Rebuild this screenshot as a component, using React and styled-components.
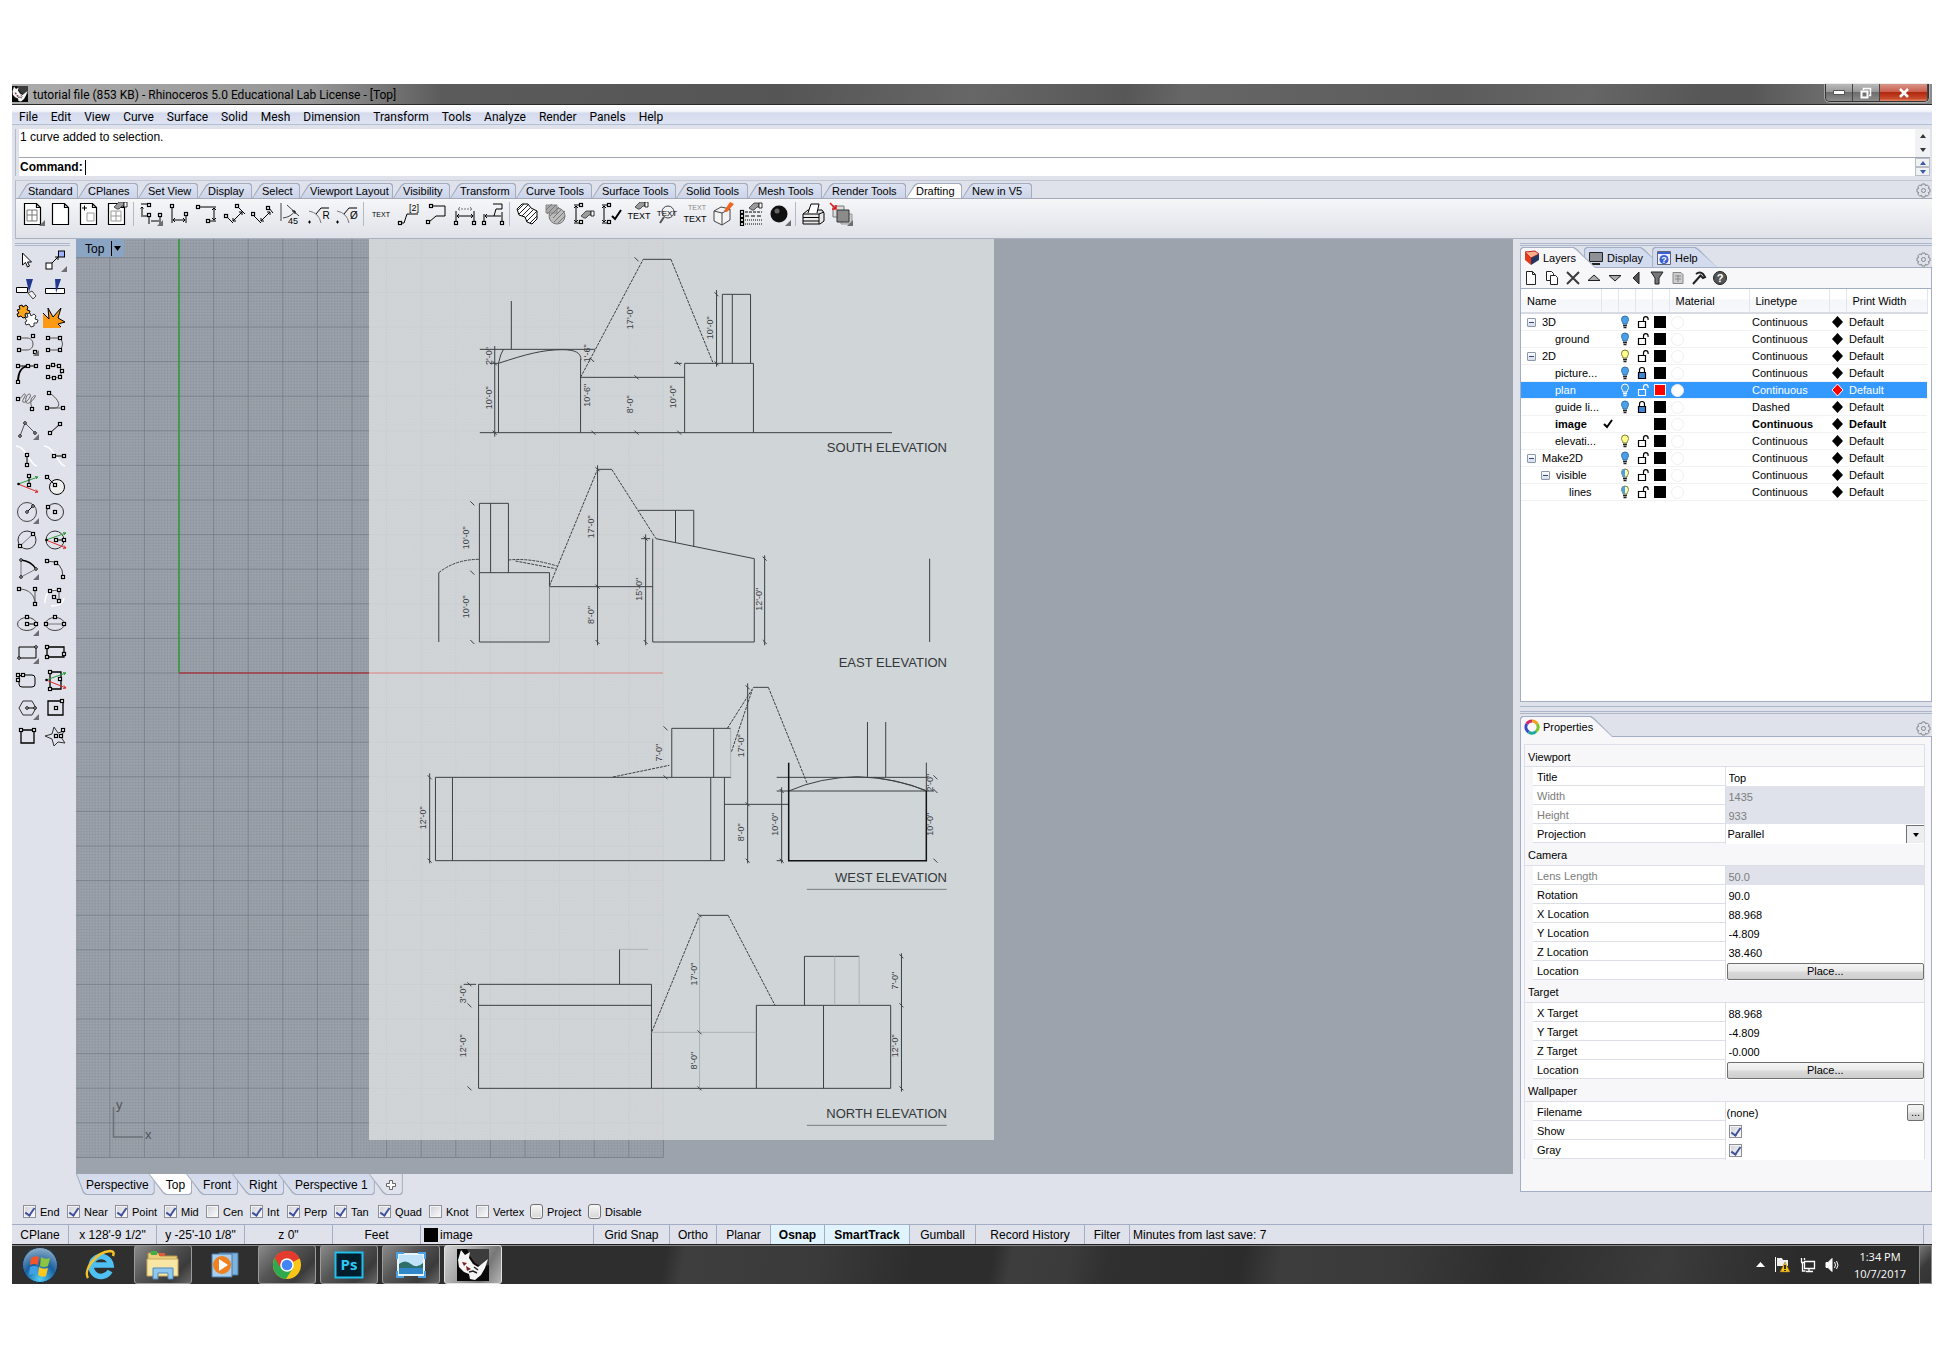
import React from 'react';
import styled, { createGlobalStyle, css } from 'styled-components';

const ui = '"Liberation Sans", Arial, sans-serif';
const caption = 'Roboto, "Open Sans", sans-serif';
const segoe = '"Open Sans", "Noto Sans", sans-serif';

const Global = createGlobalStyle`
  * { box-sizing: border-box; }
  body { margin: 0; background: #fff; color: #000; font: 11px/16px ${ui}; }
  button, input, select { font: inherit; color: inherit; margin: 0; }
  button { padding: 0; border: 0; background: none; }
  svg { display: block; flex: none; }
`;

const Page = styled.div`
  min-height: 100vh;
  padding: 84px 12px;
`;
const Window = styled.div`
  display: flex;
  flex-direction: column;
  height: calc(100vh - 168px);
  min-height: 900px;
  background: #dfe2ea;
`;

/* ---------- title bar ---------- */
const TitleBar = styled.header`
  display: flex;
  align-items: center;
  height: 21px;
  flex: none;
  padding-right: 3px;
  gap: 5px;
  border-bottom: 1px solid #2b2b2b;
  font: 12px/20px ${caption};
  background:
    linear-gradient(90deg, rgba(175,175,175,.95) 0, rgba(160,160,160,.85) 300px, rgba(100,100,100,0) 430px, transparent calc(100% - 180px), rgba(170,170,170,.6) 100%),
    linear-gradient(100deg, #666 0, #5a5a5a 25%, #555 40%, #676767 50%, #575757 58%, #666 61%, #5c5c5c 75%, #666 82%, #575757 88%, #5a5a5a 100%);
`;
const Title = styled.h1`
  margin: 0;
  padding-top: 1px;
  flex: 1;
  font: inherit;
`;
const WinButtons = styled.div`
  display: flex;
  align-self: flex-start;
  height: 18px;
  border: 1px solid #333;
  border-top: 0;
  border-radius: 0 0 5px 5px;
  overflow: hidden;
  box-shadow: 0 0 0 1px rgba(220,220,220,.5);
`;
const WinButton = styled.button`
  display: grid;
  place-items: center;
  width: ${p => (p.$close ? 48 : 27)}px;
  border-right: 1px solid #444;
  background: ${p => p.$close
    ? 'linear-gradient(#d9958a, #c9604e 45%, #b1280f 50%, #c8492c 85%, #e08a6a)'
    : 'linear-gradient(#b9b9b9, #9a9a9a 45%, #6d6d6d 50%, #8b8b8b)'};
`;

/* ---------- menu and command ---------- */
const MenuBar = styled.nav`
  display: flex;
  flex: none;
  gap: 13px;
  height: 20px;
  padding-left: 7px;
  border-bottom: 1px solid #b3bfd2;
  font: 12px/22px ${caption};
  background: linear-gradient(#fff, #f0f3fa 35%, #d5dbed 42%, #dfe4f4);
`;
const MenuItem = styled.button`
  padding-top: 1px;
  white-space: nowrap;
`;
const CommandArea = styled.section`
  flex: none;
  margin: 4px 2px 4px 3px;
  padding-left: 3px;
  border-left: 1px solid #b3bac8;
  font-size: 12px;
`;
const CommandLine = styled.div`
  display: flex;
  align-items: center;
  height: ${p => p.$h}px;
  padding-left: 1px;
  background: #fff;
  ${p => p.$history && css`
    align-items: flex-start;
    border-bottom: 1px solid #a0a5b1;
  `}
`;
const Grow = styled.span`
  flex: 1;
`;
const CommandLabel = styled.label`
  font-weight: bold;
  padding: 0 2px 1px 0;
`;
const CommandInput = styled.input`
  flex: 1;
  height: 15px;
  border: 0;
  border-left: 1px solid #000;
  outline: 0;
`;
const Spin = styled.div`
  display: grid;
  grid-template-rows: 1fr 1fr;
  width: 15px;
  height: 100%;
  background: #f1f2f4;
`;
const SpinButton = styled.button`
  display: grid;
  place-items: center;
  border: ${p => (p.$boxed ? '1px solid #b9bdc8' : '0')};
`;

/* ---------- tool tabs ---------- */
const TabStrip = styled.div`
  display: flex;
  flex: none;
  align-items: flex-end;
  height: 19px;
  margin-left: 3px;
  padding-left: 2px;
  border-top: 1px solid #c2c7d3;
  border-bottom: 1px solid #a3a9b6;
  border-left: 1px solid #b3bac8;
`;
const ToolTab = styled.button`
  position: relative;
  isolation: isolate;
  width: ${p => p.$w}px;
  height: 15px;
  padding-left: 10px;
  line-height: 16px;
  text-align: left;
  white-space: nowrap;
  &::before, &::after {
    content: '';
    position: absolute;
    z-index: -1;
    inset: 0;
    background: #a4adbf;
    clip-path: polygon(0 100%, 8px 2px, 11px 0, calc(100% - 2px) 0, 100% 2px, 100% 100%);
  }
  &::after {
    inset: 1px 1px 0 1px;
    background: ${p => (p.$active ? '#fff' : 'linear-gradient(#dde3f1, #ccd4e9)')};
  }
`;
const Gear = styled.button`
  margin-left: auto;
  padding: 1px 1px 0 0;
`;
const Toolbar = styled.div`
  display: flex;
  flex: none;
  height: 40px;
  margin-left: 3px;
  padding: 1px 0 0 3px;
  border-left: 1px solid #b3bac8;
  border-bottom: 1px solid #a9b0c0;
  background: linear-gradient(#f6f6f8, #dfe2e9);
`;
const ToolButton = styled.button`
  display: grid;
  place-items: center;
  width: 28px;
  height: 28px;
  flex: none;
`;
const ToolSep = styled.span`
  width: 6px;
  height: 24px;
  margin-top: 2px;
  background: linear-gradient(90deg, transparent 2px, #b5b9c3 2px, #b5b9c3 3px, transparent 3px);
`;

/* ---------- workspace ---------- */
const Workspace = styled.div`
  display: flex;
  flex: 1;
  min-height: 0;
`;
const Sidebar = styled.aside`
  width: 64px;
  flex: none;
  padding: 4px 0 0 1px;
`;
const Grip = styled.div`
  height: 3px;
  margin-right: ${p => p.$r || 0}px;
  margin-left: ${p => p.$l || 0}px;
  border: solid #aeb7ca;
  border-width: 1px 0;
`;
const SideTools = styled.div`
  display: grid;
  grid-template-columns: 28px 28px;
  grid-auto-rows: 28px;
`;
const Center = styled.main`
  display: flex;
  flex: 1;
  flex-direction: column;
  min-width: 0;
`;
const Viewport = styled.div`
  position: relative;
  flex: 1;
  min-height: 0;
  overflow: hidden;
  background: #9da3ac;
`;
const ViewTitle = styled.button`
  position: absolute;
  top: 0;
  left: 0;
  display: flex;
  align-items: center;
  gap: 7px;
  height: 18px;
  padding: 1px 3px 0 9px;
  background: #8aa4c4;
  font-size: 12px;
`;
const ViewArrow = styled.span`
  display: grid;
  place-items: center;
  height: 15px;
  padding-left: 2px;
  border-left: 1px solid #000;
`;
const ViewTabs = styled.div`
  display: flex;
  flex: none;
  height: 23px;
`;
const ViewTab = styled.button`
  --slant: 14px;
  position: relative;
  isolation: isolate;
  display: grid;
  place-items: center;
  height: 21px;
  margin-right: -6px;
  padding: 0 7px 0 17px;
  font-size: 12px;
  white-space: nowrap;
  &:first-child {
    --slant: 7px;
    padding: 0 6px 0 10px;
  }
  &::before, &::after {
    content: '';
    position: absolute;
    z-index: -1;
    inset: 0;
    background: #a4adbf;
    clip-path: polygon(0 0, 100% 0, 100% calc(100% - 2px), calc(100% - 2px) 100%, calc(var(--slant) + 3px) 100%, var(--slant) calc(100% - 2px));
  }
  &::after {
    inset: 0 1px 1px 1px;
    background: ${p => (p.$active ? '#fff' : p.$plain ? '#e0e3ec' : 'linear-gradient(#d3daeb, #dbe0ee)')};
  }
`;

/* ---------- right panels ---------- */
const RightColumn = styled.aside`
  display: flex;
  flex-direction: column;
  width: 412px;
  flex: none;
  margin: 4px 0 5px 7px;
`;
const PanelTabs = styled.div`
  display: flex;
  align-items: flex-end;
  flex: none;
  height: ${p => p.$h}px;
  border-bottom: 1px solid #a3aec4;
`;
const PanelTab = styled.button`
  position: relative;
  isolation: isolate;
  display: flex;
  align-items: center;
  gap: 3px;
  height: 21px;
  margin-bottom: -1px;
  margin-right: ${p => p.$overlap || 0}px;
  padding: 0 20px 0 4px;
  z-index: ${p => (p.$active ? 3 : 1)};
  &::before, &::after {
    content: '';
    position: absolute;
    z-index: -1;
    inset: 0;
    background: #a3aec4;
    clip-path: polygon(0 2px, 2px 0, calc(100% - 22px) 0, calc(100% - 19px) 2px, 100% 100%, 0 100%);
  }
  &::after {
    inset: 1px 1px ${p => (p.$active ? 0 : 1)}px 1px;
    background: ${p => (p.$active ? '#f7f7fa' : '#d3dbee')};
  }
`;
const LayersBody = styled.section`
  display: flex;
  flex-direction: column;
  flex: 1;
  min-height: 0;
  border: 1px solid #a3aec4;
  border-top: 0;
  background: #fff;
`;
const LayerTools = styled.div`
  display: flex;
  align-items: center;
  gap: 5px;
  height: 21px;
  padding-left: 2px;
  border-bottom: 1px solid #a3aec4;
  background: #f7f7fa;
`;
const LayerTool = styled.button`
  width: 16px;
  height: 16px;
`;
const LayerTable = styled.table`
  width: 406px;
  table-layout: fixed;
  border-collapse: collapse;
`;
const Th = styled.th`
  height: 24px;
  padding: 0 0 0 6px;
  border-right: 1px solid #e3e6ee;
  border-bottom: 2px solid #d9dbe2;
  text-align: left;
  font-weight: normal;
  white-space: nowrap;
  background: linear-gradient(#fff 45%, #f5f6f9 46%, #f7f8fb);
`;
const LayerRow = styled.tr`
  height: 17px;
  ${p => p.$bold && css`font-weight: bold;`}
  ${p => p.$selected && css`background: #3399ff; color: #fff;`}
`;
const Td = styled.td`
  height: 17px;
  padding: 0 0 0 ${p => p.$pl || 0}px;
  border-bottom: 1px solid #f1f2f4;
  line-height: 16px;
  white-space: nowrap;
`;
const LayerName = styled.div`
  display: flex;
  align-items: center;
  gap: 6px;
  padding-left: ${p => p.$indent}px;
`;
const Expander = styled.button`
  width: 9px;
  height: 9px;
  border: 1px solid #8a97ad;
  border-radius: 1px;
  background: linear-gradient(#2d4a7c, #2d4a7c) center / 5px 1px no-repeat, linear-gradient(#fff, #d6dbe5);
`;
const Swatch = styled.div`
  width: 12px;
  height: 12px;
  margin-left: 2px;
  background: ${p => p.$c};
  border: 1px solid ${p => (p.$selected ? '#fff' : p.$c)};
`;
const MaterialDot = styled.div`
  width: 13px;
  height: 13px;
  margin-left: 2px;
  border: 1px solid #eeeff2;
  border-radius: 50%;
  background: #fff;
`;
const Splitter = styled.div`
  flex: none;
  height: 14px;
  padding-top: 4px;
`;
const SplitLine = styled.div`
  height: ${p => p.$h}px;
  border-top: 1px solid #aeb7ca;
`;
const PropsBody = styled.section`
  flex: none;
  padding: 7px 6px 32px 3px;
  border: 1px solid #a3aec4;
  border-top: 0;
  background: #f7f7fa;
`;
const PropsGrid = styled.div`
  border: 1px solid #dcdfe7;
  border-bottom: 0;
`;
const PropHeader = styled.h2`
  height: ${p => (p.$first ? 22 : 23)}px;
  margin: 0;
  padding-left: 3px;
  border-bottom: 1px solid #dcdfe7;
  font: 11px/24px ${ui};
`;
const PropRow = styled.div`
  display: grid;
  grid-template-columns: 1fr 1fr;
  height: 19px;
  margin-left: 8px;
  border-bottom: 1px solid #dcdfe7;
  background: #fff;
  color: ${p => (p.$off ? '#7d7d7d' : '#000')};
`;
const PropLabel = styled.label`
  padding-left: 4px;
  margin-right: -4px;
  line-height: 20px;
`;
const PropCell = styled.div`
  display: flex;
  align-items: center;
  min-width: 0;
  margin-left: -4px;
  padding: ${p => (p.$tight ? '0 0 0 1px' : '0 0 0 3px')};
  border-left: 1px solid #dcdfe7;
  background: ${p => (p.$off ? '#dfe2ea' : '#fff')};
`;
const PropInput = styled.input`
  width: 100%;
  min-width: 0;
  height: 18px;
  padding: 1px 0 0;
  border: 0;
  outline: 0;
  background: transparent;
`;
const PropSelect = styled.select`
  width: 100%;
  height: 18px;
  padding: 0 0 0 1px;
  border: 0;
  appearance: none;
  background: transparent;
`;
const DropButton = styled.span`
  display: grid;
  place-items: center;
  width: 18px;
  height: 18px;
  flex: none;
  border: solid #6d7078;
  border-width: 1px 0 0 1px;
  background: #eceef0;
`;
const PushButton = styled.button`
  height: 17px;
  width: ${p => (p.$small ? '17px' : '100%')};
  flex: none;
  border: 1px solid #707070;
  border-radius: 2px;
  line-height: 15px;
  background: linear-gradient(#f4f4f4, #ebebeb 48%, #dadada 52%, #cfcfcf);
`;
const Check = styled.input`
  position: relative;
  appearance: none;
  width: 13px;
  height: 13px;
  flex: none;
  border: 1px solid #8e8f94;
  background: linear-gradient(135deg, #cdd0d6, #fdfdfd);
  box-shadow: inset 0 0 0 1px #f4f4f4;
  ${p => p.$round && css`
    height: 15px;
    border-color: #707070;
    border-radius: 3px;
    background: linear-gradient(#f7f7f7, #d5d5d5);
  `}
  &:checked::after {
    content: '';
    position: absolute;
    left: 3px;
    top: 0;
    width: 4px;
    height: 8px;
    border: solid #41509a;
    border-width: 0 2px 2px 0;
    transform: rotate(35deg);
  }
`;

/* ---------- bottom bars ---------- */
const Osnap = styled.div`
  display: flex;
  align-items: center;
  flex: none;
  height: 27px;
  margin-left: 3px;
  padding: 2px 0 0 8px;
`;
const OsnapItem = styled.label`
  display: flex;
  align-items: center;
  gap: 4px;
  width: ${p => p.$w}px;
  white-space: nowrap;
`;
const StatusBar = styled.footer`
  display: flex;
  flex: none;
  height: 20px;
  padding-right: 8px;
  border-top: 1px solid #a3aec4;
  font-size: 12px;
`;
const StatusCell = styled.button`
  display: flex;
  align-items: center;
  justify-content: ${p => (p.$left ? 'flex-start' : 'center')};
  gap: 2px;
  width: ${p => p.$w}px;
  padding-left: ${p => (p.$left ? 3 : 0)}px;
  border-right: 1px solid #a3aec4;
  white-space: nowrap;
  ${p => p.$grow && css`flex: 1;`}
  ${p => p.$on && css`background: #e1f3fd; font-weight: bold;`}
`;
const LayerChip = styled.span`
  width: 14px;
  height: 14px;
  background: #000;
`;
const Taskbar = styled.div`
  display: flex;
  align-items: stretch;
  flex: none;
  gap: 4px;
  height: 40px;
  border-top: 1px solid #222;
  box-shadow: inset 0 1px 0 #8b8b8b;
  background: linear-gradient(100deg, #2f2f2f 0, #2e2e2e 34%, #3e3e3e 35%, #3a3a3a 42%, #2d2d2d 47%, #2d2d2d 51%, #3d3d3d 52%, #3b3b3b 55%, #303030 57%, #2c2c2c 64%, #3d3d3d 66%, #3a3a3a 72%, #2d2d2d 78%, #3b3b3b 86%, #2b2b2b 93%);
`;
const TaskButton = styled.button`
  display: grid;
  place-items: center;
  width: ${p => (p.$start ? 56 : 58)}px;
  border-radius: 3px;
  ${p => p.$open && css`
    border: 1px solid #9b9b9b;
    background: linear-gradient(135deg, #8a8a8a, #555 40%, #3b3b3b 75%, #666);
  `}
  ${p => p.$current && css`
    border: 1px solid #e3e3e3;
    background: linear-gradient(120deg, #d4d4d4, #9c9c9c 45%, #777 70%, #b5b5b5);
  `}
`;
const Tray = styled.div`
  display: flex;
  align-items: center;
  margin-left: auto;
  gap: 9px;
  color: #fff;
`;
const Clock = styled.time`
  width: 60px;
  text-align: center;
  font: 11px/17px ${segoe};
`;
const ShowDesktop = styled.button`
  width: 13px;
  align-self: stretch;
  border: 1px solid #8b8b8b;
  background: linear-gradient(135deg, #777, #3a3a3a 50%, #333);
`;

/* ---------- icon helpers ---------- */
const Svg = ({ s = 24, children }) => (
  <svg width={s} height={s} viewBox={`0 0 ${s} ${s}`} fill="none" stroke="#000" strokeWidth="1">{children}</svg>
);
const Tri = () => <path d="M24 18v6h-6z" fill="#6e6e72" stroke="none" />;
const Nodes = ({ at }) => at.map(([x, y], i) => (
  <rect key={i} x={x - 1.5} y={y - 1.5} width="3" height="3" fill="#fff" stroke="#000" strokeWidth="1.2" />
));
const Dots = ({ at }) => at.map(([x, y], i) => (
  <circle key={i} cx={x} cy={y} r="1.3" fill="#fff" stroke="#000" />
));
const Axes = () => (
  <>
    <path d="M3 12L23 5M20 4.5l3 .5-2 2" stroke="#2f9e3c" />
    <path d="M3 12l20 8M21 17.500l2 2.500-3 .5" stroke="#e02b2b" />
    <circle cx="3.500" cy="12" r="1.300" fill="#000" stroke="none" />
  </>
);
const Hand = ({ x = 0, y = 0 }) => (
  <g transform={`translate(${x} ${y})`}>
    <path d="M0 5L5 0h5v4H8L5 7H3z" fill="#9a9a9a" stroke="#333" strokeWidth=".8" />
    <path d="M10 0h3v5h-3z" fill="#fff" strokeWidth=".8" />
  </g>
);
const PageShape = ({ fill = '#fff' }) => <path d="M3.500 1.500h12l4 4v17h-16zM15.500 1.500v4h4" fill={fill} strokeWidth="1.200" />;

const sideIcons = [
  ['Select', <path key="a" d="M7.500 5v12l3-2.500 2 4.500 2-1-2-4h4z" fill="#fff" />],
  ['Move', <><path d="M8 16l7-7M12 9h3v3" /><rect x="3" y="15" width="6" height="6" fill="#fff" /><rect x="15.500" y="3" width="6" height="6" fill="#9db4ff" /><Tri /></>],
  ['Trim', <><path d="M1.500 11.500h11v5h-11z" fill="#fff" /><path d="M11 3h7l-4 13z" fill="#213a8f" stroke="none" /><path d="M13 17l4-2 4 5-3 3z" fill="#f0f0f0" stroke="#444" /></>],
  ['Split', <><path d="M2.500 12.500h19v5h-19z" fill="#fff" /><path d="M12 3h6l-5 14z" fill="#213a8f" stroke="none" /></>],
  ['Join', <><path d="M2 6l3-1-1-3 3-1 1 2 3-2 2 2-1 3 3 1-1 3-3-1-1 2 1 2-3 1-2-2-3 1-1-3 2-1z" fill="#f9a51a" /><path d="M10 14l3-1-1-3 3-1 1 3 3-2 2 2-1 3 3 1-1 3-3 0 0 3-3 1-2-3-3 1-1-3 2-1z" fill="#fff" stroke="#333" /></>],
  ['Explode', <><path d="M0 24V9l6 6-1-11 5 9 8-9-3 10 7 4-7 2 3 4z" fill="#fb9a12" stroke="none" /><path d="M0 9l6 6-1-11 5 9 8-9-3 10 7 4-7 2 3 3" /></>],
  ['Curve', <><path d="M4 6h8c8 0 8 12 0 12H4" stroke="#555" /><Nodes at={[[4, 6], [18, 4], [4, 18], [20, 20]]} /><Tri /></>],
  ['Interpolate curve', <><path d="M5 6h12q5 6 0 12H5" stroke="#555" /><Nodes at={[[5, 6], [17, 6], [5, 18], [17, 18]]} /></>],
  ['Conic', <><path d="M3 22C3 12 7 6 14 6" strokeWidth="2" /><path d="M3 6h18" /><Nodes at={[[3, 6], [13, 6], [21, 6], [3, 22]]} /></>],
  ['Points curve', <><path d="M5 7l5-2 6 1 3 5-2 6-6 1-6-1" stroke="#777" /><Nodes at={[[5, 7], [10, 5], [16, 6], [19, 11], [17, 17], [11, 18], [5, 17]]} /></>],
  ['Helix', <><path d="M3 11c4 0 5-6 7-5s-4 7-2 8 5-1 7-5-3-4-4 1 1 6 3 5 4-3 6-6-3-1-4 3 1 6 1 9" stroke="#666" /><Nodes at={[[3, 11], [17, 21]]} /></>],
  ['Parabola', <><path d="M6 5c8 4 14 14 6 15H4h16" stroke="#555" /><Nodes at={[[6, 5], [4, 20], [20, 20]]} /></>],
  ['Polyline', <><path d="M5 20L10 7l10 10" stroke="#555" /><Dots at={[[5, 20], [10, 7], [20, 17]]} /><Tri /></>],
  ['Line', <><path d="M7 17L17 8" /><Nodes at={[[7, 17], [17, 8]]} /></>],
  ['Line perpendicular', <><path d="M1 2c8 1 8 6 11 9s5 10 10 11" stroke="#fff" strokeWidth="1.500" /><path d="M12 11v10" /><Nodes at={[[12, 11], [12, 21]]} /></>],
  ['Line tangent', <><path d="M1 2c8 1 8 6 11 9s5 10 10 11" stroke="#fff" strokeWidth="1.500" /><path d="M11 12h10" /><Nodes at={[[11, 12], [21, 12]]} /></>],
  ['Line axis', <><Axes /><path d="M14 4v9" /><Nodes at={[[14, 4], [14, 13]]} /></>],
  ['Circle deformable', <><circle cx="14" cy="15" r="7.500" fill="#eee" /><path d="M4 5l8 8" /><Nodes at={[[4, 5], [12, 13]]} /></>],
  ['Circle', <><circle cx="12" cy="12" r="9.500" stroke="#444" /><path d="M12 12l6-6" /><Dots at={[[12, 12], [18, 6]]} /><Tri /></>],
  ['Circle centre', <><circle cx="12" cy="12" r="8.500" stroke="#333" /><Nodes at={[[5, 7], [12, 12]]} /></>],
  ['Circle diameter', <><circle cx="12" cy="12" r="9" stroke="#333" /><path d="M5 18L18 6" stroke="#777" /><Nodes at={[[5, 18], [18, 6]]} /></>],
  ['Circle axis', <><circle cx="12" cy="12" r="9" stroke="#333" /><Axes /><path d="M13 12h8" /><Nodes at={[[13, 12], [21, 12]]} /></>],
  ['Arc', <><path d="M6 21V4" stroke="#777" /><path d="M6 4q10 1 15 9" strokeWidth="1.300" /><path d="M21 13L6 21" stroke="#777" /><Dots at={[[6, 4], [6, 21], [21, 13]]} /><Tri /></>],
  ['Arc points', <><path d="M4 5q16 0 16 16" stroke="#444" /><Nodes at={[[4, 5], [13, 7], [20, 21]]} /></>],
  ['Arc tangent', <><path d="M4 5c10 0 16 6 16 15V5" stroke="#555" /><Nodes at={[[4, 5], [20, 5], [20, 20]]} /></>],
  ['Arc chain', <><path d="M2 19Q2 4 16 6M8 22q12 0 13-8" stroke="#fff" strokeWidth="1.500" /><path d="M7 7l9-1v11l-5-4" stroke="#555" /><Nodes at={[[7, 7], [16, 6], [11, 13], [16, 17]]} /></>],
  ['Ellipse', <><ellipse cx="12" cy="12" rx="9.500" ry="6.500" stroke="#444" /><path d="M12 12h9" /><Nodes at={[[12, 12], [21, 12], [12, 5]]} /><Tri /></>],
  ['Ellipse diameter', <><ellipse cx="12" cy="12" rx="9.500" ry="6.500" stroke="#444" /><path d="M3 12h18" stroke="#777" /><Nodes at={[[3, 12], [21, 12], [12, 5]]} /></>],
  ['Rectangle', <><path d="M4 7h17v11H4z" /><Dots at={[[4, 18], [21, 7]]} /><Tri /></>],
  ['Rectangle points', <><path d="M4 7h17v10H4z" strokeWidth="1.300" /><Nodes at={[[4, 7], [4, 17], [21, 14]]} /></>],
  ['Rounded rectangle', <><rect x="4" y="7" width="16" height="12" rx="3" /><Nodes at={[[3, 7], [8, 7], [3, 12]]} /></>],
  ['Rectangle axis', <><path d="M7 4h11v17H7z" strokeWidth="1.300" /><Axes /><Nodes at={[[7, 4], [7, 21], [17, 11]]} /></>],
  ['Polygon', <><path d="M4 12l4-7h9l4 7-4 7H8z" stroke="#333" /><path d="M12 12h8" /><Dots at={[[12, 12], [20, 12]]} /><Tri /></>],
  ['Square centre', <><path d="M5 5h15v14H5z" strokeWidth="1.300" /><Nodes at={[[19, 5], [13, 12]]} /></>],
  ['Square', <><path d="M6 6h13v13H6z" strokeWidth="1.300" /><Nodes at={[[6, 6], [19, 6]]} /></>],
  ['Star', <><path d="M2 12l7-2 2-7 4 6 6-2-3 6 4 6-7-1-4 4-2-7z" stroke="#333" /><Nodes at={[[20, 6], [13, 12], [18, 12]]} /></>],
];

const label = (x, y, t, size = 9, fill = '#000') => (
  <text x={x} y={y} fontSize={size} fill={fill} stroke="none" fontFamily="Liberation Sans, Arial, sans-serif" textAnchor="middle">{t}</text>
);
const hatch = 'M3 8l6-6M4 12L13 3M7 14l9-9M10 16l9-9M11 20l11-11M15 21l7-7';
const topIcons = [
  [
    ['Layout', <><PageShape /><path d="M6 8h10v11H6zM11 8v11M6 13h10" stroke="#777" /><Tri /></>],
    ['New detail', <PageShape key="a" />],
    ['Add page', <><PageShape /><path d="M5 6h5M7.500 3.500v5" /><path d="M10 11h7v8h-7z" stroke="#999" /></>],
    ['Page properties', <><PageShape /><path d="M6 9h10v10H6zM11 9v10M6 14h10" stroke="#999" /><Hand x={9} y={0} /></>],
  ],
  [
    ['Dimension', <><path d="M2 2h8M3 5v8M1.500 6.500L3 5l1.500 1.500M2 14h8v8M21 14v8M12 19h8" /><Nodes at={[[10, 3], [10, 13], [21, 13]]} /><Tri /></>],
    ['Horizontal dimension', <><path d="M5 4v17M19 13v8M6 18h12M8 16l-2 2 2 2M16 16l2 2-2 2" /><Nodes at={[[5, 4], [19, 12]]} /></>],
    ['Vertical dimension', <><path d="M3 5h18M12 19h9M19 6v12M17 8l2-2 2 2M17 16l2 2 2-2" /><Nodes at={[[3, 5], [13, 19]]} /></>],
    ['Aligned dimension', <><path d="M3 14l7 7M14 4l8 8M10 19l9-9M10 16v3h3M16 10h3v3" /><Nodes at={[[3, 14], [14, 4]]} /></>],
    ['Rotated dimension', <><path d="M2 13l8 8M18 6l4 5M10 19l9-9M10 16v3h3M16 10h3v3" /><Nodes at={[[2, 12], [17, 6]]} /></>],
    ['Angle dimension', <><path d="M2 1v18M8 3l12 11M4 16q8-1 12-7" stroke="#444" /><path d="M13 9h3v3" />{label(14, 22, '45')}</>],
    ['Radius dimension', <><path d="M2 9q10 2 12 12" stroke="#777" /><path d="M9 12l5-6h8" /><path d="M1 20h3M2.500 18.500v3" />{label(19, 17, 'R', 10)}</>],
    ['Diameter dimension', <><path d="M2 9q10 2 12 12" stroke="#777" /><path d="M9 12l5-6h8" /><path d="M1 20h3M2.500 18.500v3" />{label(19, 17, 'Ø', 10)}</>],
  ],
  [
    ['Text', label(12, 15, 'TEXT', 7)],
    ['Leader number', <><path d="M3 21h4l3-9h11" />{label(17, 9, '[2]')}<Nodes at={[[3, 21]]} /></>],
    ['Leader', <><path d="M7 4h13v10l-9 0-7 6" /><Nodes at={[[6, 4], [3, 20]]} /></>],
    ['Edit dimension', <><path d="M3 9v12M21 9v12M4 14h16M6 12l-2 2 2 2M18 12l2 2-2 2" /><path d="M5 7h14M7 5L5 7l2 2M17 5l2 2-2 2" stroke="#777" strokeDasharray="2 1" /><Nodes at={[[3, 21], [21, 21]]} /></>],
    ['Reset dimension', <><path d="M3 12v9M21 10v11M4 14h16M6 12l-2 2 2 2M12 2h9v5h-6l-2 7" /><Nodes at={[[3, 21], [21, 21]]} /></>],
  ],
  [
    ['Hatch', <><path d="M2 7l5-5h6l3 4 6 3v8l-5 5-5-2-2-5-6-2z" fill="#fff" /><path d={hatch} stroke="#222" /></>],
    ['Hatch edit', <><circle cx="14" cy="14" r="8" fill="#bbb" stroke="#777" /><path d="M3 3h11v8H3z" fill="#aaa" stroke="#888" /><path d={hatch} stroke="#777" /></>],
    ['Dimension properties', <><path d="M3 3h8M5 4v16M3 21h8M3 6l2-2 2 2M3 18l2 2 2-2" /><Nodes at={[[10, 3], [10, 20]]} /><Hand x={10} y={9} /></>],
    ['Apply dimension style', <><path d="M3 3h8M5 4v16M3 21h8M3 6l2-2 2 2M3 18l2 2 2-2" /><Nodes at={[[10, 3], [10, 20]]} /><path d="M13 14l3 3 6-9" strokeWidth="2" /></>],
    ['Text properties', <>{label(12, 17, 'TEXT', 9)}<Hand x={8} y={0} /></>],
    ['Find text', <>{label(12, 14, 'TEXT', 8)}<circle cx="13" cy="10" r="6" stroke="#444" /><path d="M9 15l-4 6" strokeWidth="2" stroke="#555" /></>],
    ['Replace text', <>{label(14, 8, 'TEXT', 7, '#888')}{label(12, 20, 'TEXT', 9)}</>],
    ['Make 2D', <><path d="M3 9l7-4 9 2v11l-8 5-8-4zM3 9l8 2 8-4M11 11v12" fill="#f4f4f4" stroke="#444" /><path d="M13 9l6-9 4 2-7 8z" fill="#f0641e" stroke="none" /></>],
    ['Linetypes', <><path d="M6 10h17" strokeDasharray="3 1" /><path d="M6 14h17" strokeDasharray="4 2" /><path d="M6 18h17M6 22h17" strokeDasharray="1 1" /><Nodes at={[[3, 10], [3, 14], [3, 18], [3, 22]]} /><Hand x={10} y={1} /></>],
    ['Sphere', <><circle cx="12" cy="12" r="8.500" fill="#111" stroke="none" /><circle cx="10" cy="9" r="2.500" fill="#666" stroke="none" /><Tri /></>],
  ],
  [
    ['Print', <><path d="M2 12l5-4h14l2 3v8l-4 3H2z" fill="#e8e8e8" /><path d="M7 11l3-9h8l-2 9" fill="#fff" /><path d="M2 12h16v10M18 12l5-2M2 15.500h16M2 19h16" /></>],
    ['Layer print', <><path d="M4 4h11v11H4z" fill="#ddd" stroke="#777" /><path d="M12 12h11v10H12z" fill="#ccc" stroke="#999" /><path d="M8 8h12v12H8z" fill="#8b8b8b" stroke="#333" /><path d="M1 1l6 6M7 3v4H3" stroke="#e01818" strokeWidth="1.500" /><Tri /></>],
  ],
];

const GearIcon = () => (
  <svg width="15" height="15" viewBox="0 0 15 15" fill="none" stroke="#84868c">
    <path d="M6 1h3l.5 1.700 1.800-.7 1.800 1.800-.8 1.700L14 6v3l-1.700.5.8 1.800-1.800 1.800-1.800-.8L9 14H6l-.5-1.700-1.800.8-1.800-1.800.8-1.800L1 9V6l1.700-.5-.8-1.700L3.700 2l1.800.7z" />
    <circle cx="7.500" cy="7.500" r="2" />
  </svg>
);
const RhinoIcon = ({ w, h }) => (
  <svg width={w} height={h} viewBox="0 0 32 32">
    <path d="M0 0h32v32H0z" fill="#0a0a0a" />
    <path d="M10 0h22v16l-7 2-7-4-5-7z" fill="#3c3c3c" />
    <path d="M4 1l4 5 5-3-1 6 4 6 5 3 10-8-3 9-4 7-6 5-5-1-1-5-5-2-5-5-1-7z" fill="#f5f5f5" />
    <path d="M5 13l5 1-3 3zM9 17l5 3-4 2z" fill="#7a2222" />
    <path d="M12 23l4-1 4 2M17 18l4 3" fill="none" stroke="#222" strokeWidth="1.500" />
  </svg>
);
const Arrow = ({ up, c = '#333' }) => (
  <svg width="6" height="4" viewBox="0 0 6 4"><path d={up ? 'M0 4l3-4 3 4z' : 'M0 0h6L3 4z'} fill={c} /></svg>
);

/* ---------- viewport drawing ---------- */
const GRID = 34.6;
const AX = 179;
const AY = 673;
const INK = '#3c4043';
const upper = { x: 360, y: 236 };
const lower = { x: 360, y: 670 };
const SX = 1 / 2.412;
const SY = 1 / 3;

const upperLines = [
  'M289 590H1283M289 340H567M365 195V340M325 330V602M334 382V590M532 370V590M532 424H783M783 590V382H949V590M683 70H750M874 382V175H942V382M898 175V382M860 162V392M758 382H776M313 382H334',
  'M334 382q5-30 12-42M334 382C400 355 440 341 490 341C520 342 533 350 533 372',
  'M190 1218V1010M288 1218V802H358V1010M315 802V1010M288 1010H457V1052M288 1218H457M573 688V1228M573 700H607M457 1052H706M689 895V1228M678 908H700M706 1218V908M706 1218H951V968L714 908M672 823H805V932M761 823V920M976 958V1228M1374 968V1218',
];
const upperDashed = 'M532 424L683 70M750 70L852 382M457 1050L573 700M607 700L714 908M190 1010Q230 970 288 970M358 972Q410 965 475 990M375 975L472 998';
const lowerLines = [
  'M168 310V580M182 322H895M182 322V572H879V322M223 322V572M846 322V572M752 322V175H894M853 175V322M935 40V580M949 52H985M879 403H1033M1017 352V580M1005 322H1370M1005 363H1385M1005 572H1020M1224 156V322M1268 156V322M1366 278V363M1034 363Q1110 322 1200 320Q1300 325 1366 363M1240 322Q1310 335 1366 362M610 322',
  'M286 943H703V1255H286zM286 1006H703M703 1255H956M956 1255V1006H1280V1255H956M1118 1006V1255M819 736H888M1072 1006V859H1204M626 943V838',
  'M1306 850V1265M250 943H280',
];
const lowerDashed = 'M610 321L746 286M886 175L949 52M896 245L946 60M985 52L1079 342M704 1085L819 736M888 736L1001 1006';
const lowerFaint = 'M894 175V322M1145 859V1006M1204 859V1006M819 736V1262M703 1087H956M626 838H695';
const ticks = [
  [upper, [[667, 70], [667, 424], [563, 590], [667, 590], [770, 590], [325, 590], [325, 382], [560, 372], [768, 382], [860, 382], [860, 175], [271, 802], [271, 1010], [271, 1218], [573, 700], [573, 1052], [573, 1218], [689, 908], [689, 1218], [976, 968], [976, 1218]]],
  [lower, [[168, 322], [168, 572], [737, 175], [737, 322], [935, 52], [935, 403], [935, 572], [1017, 363], [1017, 572], [1388, 322], [1388, 363], [1388, 572], [264, 943], [264, 1006], [264, 1255], [819, 736], [819, 1087], [819, 1255], [1306, 859], [1306, 1006], [1306, 1255]]],
];
const dims = [
  [upper, [[652, 245, `17'-0"`], [310, 360, `2'-0"`], [310, 485, `10'-0"`], [547, 352, `1'-6"`], [547, 478, `10'-6"`], [652, 505, `8'-0"`], [755, 482, `10'-0"`], [845, 275, `10'-0"`], [256, 905, `10'-0"`], [256, 1112, `10'-0"`], [558, 872, `17'-0"`], [558, 1137, `8'-0"`], [674, 1060, `15'-0"`], [962, 1090, `12'-0"`]]],
  [lower, [[152, 443, `12'-0"`], [720, 248, `7'-0"`], [920, 227, `17'-0"`], [920, 487, `8'-0"`], [1001, 463, `10'-0"`], [1375, 463, `10'-0"`], [1375, 338, `2'-0"`], [249, 973, `3'-0"`], [249, 1127, `12'-0"`], [805, 912, `17'-0"`], [805, 1172, `8'-0"`], [1290, 932, `7'-0"`], [1290, 1127, `12'-0"`]]],
];
const Strokes = ({ o, children }) => (
  <g transform={`translate(${o.x} ${o.y}) scale(${SX} ${SY})`}>{children}</g>
);
const L = ({ d, ...rest }) => <path d={d} vectorEffect="non-scaling-stroke" {...rest} />;

const gridPath = (step) => {
  let d = '';
  const left = 60;
  const right = AX + GRID * 14;
  const bottom = AY + GRID * 14;
  for (let x = right; x > left; x -= step) d += `M${x.toFixed(2)} 200V${bottom}`;
  for (let y = bottom; y > 200; y -= step) d += `M${left} ${y.toFixed(2)}H${right}`;
  return d;
};

const Drawing = () => (
  <svg width="1437" height="935" viewBox="76 239 1437 935" fill="none" stroke={INK} strokeWidth="1" fontFamily="Liberation Sans, Arial, sans-serif">
    <path d={gridPath(GRID / 12)} stroke="#858b95" strokeOpacity=".35" />
    <path d={gridPath(GRID)} stroke="#737a84" strokeOpacity=".7" />
    <path d="M179 239V673" stroke="#3a9a44" strokeWidth="1.800" />
    <path d="M179 673H663" stroke="#a03a44" strokeWidth="1.500" />
    <rect x="369" y="230" width="625" height="910" fill="#dbdee0" fillOpacity=".83" stroke="none" />
    <path d="M369 673H663" stroke="#d9a0a0" strokeWidth="1.500" />
    <Strokes o={upper}>
      {upperLines.map(d => <L key={d} d={d} />)}
      <L d={upperDashed} strokeDasharray="3 1" />
      <L d="M457 1052V1218" stroke="#85898c" />
    </Strokes>
    <Strokes o={lower}>
      {lowerLines.map(d => <L key={d} d={d} />)}
      <L d="M1034 278V572H1366V363" stroke="#111" strokeWidth="1.500" />
      <L d={lowerDashed} strokeDasharray="3 1" />
      <L d={lowerFaint} stroke="#a5a9ac" strokeWidth=".8" />
      <L d="M1078 658H1415M1078 1366H1415" stroke="#777b7e" />
    </Strokes>
    {ticks.map(([o, list]) => list.map(([x, y]) => (
      <path key={`${o.y}-${x}-${y}`} d={`M${o.x + x * SX - 2} ${o.y + y * SY - 2}l4 4`} />
    )))}
    <g fill={INK} stroke="none" fontSize="9" textAnchor="middle">
      {dims.map(([o, list]) => list.map(([x, y, t]) => (
        <text key={`${o.y}-${x}-${y}`} transform={`translate(${o.x + x * SX + 3} ${o.y + y * SY}) rotate(-90)`}>{t}</text>
      )))}
    </g>
    <g fill="#333739" stroke="none" fontSize="13" textAnchor="end">
      <text x="947" y="452">SOUTH ELEVATION</text>
      <text x="947" y="667">EAST ELEVATION</text>
      <text x="947" y="882">WEST ELEVATION</text>
      <text x="947" y="1118">NORTH ELEVATION</text>
    </g>
    <path d="M113.500 1107V1137H143" stroke="#6c7178" strokeWidth="1.500" />
    <g fill="#50555c" stroke="none" fontSize="13">
      <text x="116" y="1109">y</text>
      <text x="145" y="1139">x</text>
    </g>
  </svg>
);

/* ---------- layer table ---------- */
const BulbIcon = ({ kind, sel }) => (
  <svg width="16" height="14" viewBox="0 0 16 14">
    <path d="M7 1a3.500 3.500 0 0 0-3.500 3.500C3.500 6.500 5 7 5 9h4c0-2 1.500-2.500 1.500-4.500A3.500 3.500 0 0 0 7 1z"
      fill={kind === 'on' ? '#ffff8c' : kind === 'half' ? '#ffffb0' : '#4aa0e6'} stroke={sel ? '#fff' : kind === 'off' ? '#2d6fae' : '#7c7a30'} />
    {kind === 'half' && <path d="M7 1a3.500 3.500 0 0 0-3.500 3.500C3.500 6.500 5 7 5 9h2z" fill="#4aa0e6" />}
    <path d="M5 10.500h4M5.500 12.500h3" stroke={sel ? '#fff' : '#222'} strokeWidth="1.300" />
  </svg>
);
const LockIcon = ({ locked, sel }) => (
  <svg width="16" height="14" viewBox="0 0 16 14" fill="none" stroke={sel ? '#fff' : '#000'} strokeWidth="1.200">
    {locked
      ? <><path d="M4.500 7V4a2.500 2.500 0 0 1 5 0v3" /><path d="M3.500 6.500h7v6h-7z" fill="#3f86d6" /></>
      : <><path d="M3.500 6.500h7v6h-7z" fill={sel ? '#3399ff' : '#fff'} /><path d="M8.500 6V4a2.300 2.300 0 0 1 4.600 0v1" /></>}
  </svg>
);
const Diamond = ({ c, sel }) => (
  <svg width="16" height="14" viewBox="0 0 16 14"><path d="M8.500 1L14 7l-5.500 6L3 7z" fill={c} stroke={sel ? '#fff' : 'none'} /></svg>
);
const layers = [
  { name: '3D', indent: 6, open: true, bulb: 'off', lock: false },
  { name: 'ground', indent: 34, bulb: 'off', lock: false },
  { name: '2D', indent: 6, open: true, bulb: 'on', lock: false },
  { name: 'picture...', indent: 34, bulb: 'off', lock: true },
  { name: 'plan', indent: 34, bulb: 'off', lock: false, color: '#f00', selected: true },
  { name: 'guide li...', indent: 34, bulb: 'off', lock: true, type: 'Dashed' },
  { name: 'image', indent: 34, current: true },
  { name: 'elevati...', indent: 34, bulb: 'on', lock: false },
  { name: 'Make2D', indent: 6, open: true, bulb: 'off', lock: false },
  { name: 'visible', indent: 20, open: true, bulb: 'half', lock: false },
  { name: 'lines', indent: 48, bulb: 'half', lock: false },
];
const columns = [['Name', 80], ['', 17], ['', 17], ['', 17], ['', 17], ['Material', 80], ['Linetype', 80], ['', 17], ['Print Width', 81]];

const I16 = ({ children }) => <svg width="16" height="16" viewBox="0 0 16 16" fill="none" stroke="#222">{children}</svg>;
const layerTools = [
  ['New layer', <path key="a" d="M3.500 1.500h6l3 3v10h-9zM9.500 1.500v3h3" fill="#fff" />],
  ['New sublayer', <><path d="M2.500 1.500h5l2 2v7h-7z" fill="#fff" /><path d="M6.500 5.500h5l2 2v7h-7z" fill="#fff" /></>],
  ['Delete', <path key="a" d="M2 2l12 12M14 2L2 14" stroke="#3a3a3a" strokeWidth="2" />],
  ['Move up', <path key="a" d="M2 10.500h12L8 5z" fill="#aaa" />],
  ['Move down', <path key="a" d="M2 5.500h12L8 11z" fill="#aaa" />],
  ['Move out', <path key="a" d="M11 2v12L5 8z" fill="#555" />],
  ['Filter', <path key="a" d="M2 2h12l-4 6v6H6V8z" fill="#777" />],
  ['Columns', <path key="a" d="M3 2.500h8l2 2v9H3zM5 6h6M5 9h6M8 5v7" fill="#ccc" stroke="#888" />],
  ['Tools', <path key="a" d="M2 14L10 5M5 4q4-3 7 0l2 3-2 1-3-3" strokeWidth="2" />],
  ['Help', <><circle cx="8" cy="8" r="6.500" fill="#555" /><text x="8" y="12" fontSize="11" fontWeight="bold" fill="#fff" stroke="none" textAnchor="middle" fontFamily="Liberation Sans, Arial, sans-serif">?</text></>],
];

/* ---------- properties ---------- */
const props = [
  ['Viewport', [['Title', 'Top'], ['Width', '1435', 'off'], ['Height', '933', 'off'], ['Projection', 'Parallel', 'select']]],
  ['Camera', [['Lens Length', '50.0', 'off'], ['Rotation', '90.0'], ['X Location', '88.968'], ['Y Location', '-4.809'], ['Z Location', '38.460'], ['Location', 'Place...', 'button']]],
  ['Target', [['X Target', '88.968'], ['Y Target', '-4.809'], ['Z Target', '-0.000'], ['Location', 'Place...', 'button']]],
  ['Wallpaper', [['Filename', '(none)', 'file'], ['Show', '', 'check'], ['Gray', '', 'check']]],
];
const Property = ({ id, name, value, kind }) => {
  const off = kind === 'off';
  return (
    <PropRow $off={off}>
      <PropLabel htmlFor={id}>{name}</PropLabel>
      <PropCell $off={off} $tight={kind === 'button' || kind === 'select' || kind === 'file'}>
        {(!kind || off) && <PropInput id={id} defaultValue={value} disabled={off} />}
        {kind === 'file' && <><PropInput id={id} defaultValue={value} /><PushButton $small aria-label="Browse">...</PushButton></>}
        {kind === 'select' && <><PropSelect id={id} defaultValue={value}><option>Parallel</option></PropSelect><DropButton><Arrow c="#000" /></DropButton></>}
        {kind === 'button' && <PushButton id={id}>{value}</PushButton>}
        {kind === 'check' && <Check id={id} type="checkbox" defaultChecked />}
      </PropCell>
    </PropRow>
  );
};

const snaps = [['End', 44, 1], ['Near', 48, 1], ['Point', 49, 1], ['Mid', 42, 1], ['Cen', 44, 0], ['Int', 37, 1], ['Perp', 47, 1], ['Tan', 44, 1], ['Quad', 51, 1], ['Knot', 47, 0], ['Vertex', 54, 0], ['Project', 58, 0, 1], ['Disable', 60, 0, 1]];
const toolTabs = [['Standard', 60], ['CPlanes', 60], ['Set View', 60], ['Display', 54], ['Select', 48], ['Viewport Layout', 93], ['Visibility', 57], ['Transform', 66], ['Curve Tools', 76], ['Surface Tools', 84], ['Solid Tools', 72], ['Mesh Tools', 74], ['Render Tools', 84], ['Drafting', 56], ['New in V5', 70]];

export default function App() {
  return (
    <Page>
      <Global />
      <Window>
        <TitleBar>
          <RhinoIcon w={16} h={16} />
          <Title>tutorial file (853 KB) - Rhinoceros 5.0 Educational Lab License - [Top]</Title>
          <WinButtons>
            <WinButton aria-label="Minimize"><svg width="12" height="5"><path d="M.5.5h11v4H.5z" fill="#fff" stroke="#555" /></svg></WinButton>
            <WinButton aria-label="Restore"><svg width="12" height="12" fill="none"><path d="M3.500 3V1.500h7v7H9" stroke="#fff" strokeWidth="1.500" /><path d="M1.500 4.500h6v6h-6z" stroke="#fff" strokeWidth="2" /></svg></WinButton>
            <WinButton $close aria-label="Close"><svg width="12" height="10"><path d="M2 1l8 8M10 1L2 9" stroke="#fff" strokeWidth="2.500" /></svg></WinButton>
          </WinButtons>
        </TitleBar>
        <MenuBar>
          {['File', 'Edit', 'View', 'Curve', 'Surface', 'Solid', 'Mesh', 'Dimension', 'Transform', 'Tools', 'Analyze', 'Render', 'Panels', 'Help'].map(m => <MenuItem key={m}>{m}</MenuItem>)}
        </MenuBar>
        <CommandArea>
          <CommandLine $h={29} $history>
            <Grow>1 curve added to selection.</Grow>
            <Spin><SpinButton aria-label="Scroll up"><Arrow up /></SpinButton><SpinButton aria-label="Scroll down"><Arrow /></SpinButton></Spin>
          </CommandLine>
          <CommandLine $h={18}>
            <CommandLabel htmlFor="command">Command:</CommandLabel>
            <CommandInput id="command" />
            <Spin><SpinButton $boxed aria-label="Previous"><Arrow up c="#3d5aa8" /></SpinButton><SpinButton $boxed aria-label="Next"><Arrow c="#3d5aa8" /></SpinButton></Spin>
          </CommandLine>
        </CommandArea>
        <TabStrip>
          {toolTabs.map(([t, w]) => <ToolTab key={t} $w={w} $active={t === 'Drafting'}>{t}</ToolTab>)}
          <Gear aria-label="Toolbar options"><GearIcon /></Gear>
        </TabStrip>
        <Toolbar>
          {topIcons.map((group, g) => (
            <React.Fragment key={g}>
              {g > 0 && <ToolSep />}
              {group.map(([name, art]) => <ToolButton key={name} aria-label={name}><Svg>{art}</Svg></ToolButton>)}
            </React.Fragment>
          ))}
        </Toolbar>
        <Workspace>
          <Sidebar>
            <Grip $r={6} $l={2} />
            <SideTools>
              {sideIcons.map(([name, art]) => <ToolButton key={name} aria-label={name}><Svg>{art}</Svg></ToolButton>)}
            </SideTools>
          </Sidebar>
          <Center>
            <Viewport>
              <Drawing />
              <ViewTitle>Top<ViewArrow><svg width="7" height="5"><path d="M0 0h7L3.500 5z" /></svg></ViewArrow></ViewTitle>
            </Viewport>
            <ViewTabs>
              {['Perspective', 'Top', 'Front', 'Right', 'Perspective 1'].map(t => <ViewTab key={t} $active={t === 'Top'}>{t}</ViewTab>)}
              <ViewTab $plain aria-label="Add viewport"><svg width="10" height="10" fill="#fff" stroke="#666"><path d="M3.500.5h3v3h3v3h-3v3h-3v-3h-3v-3h3z" /></svg></ViewTab>
            </ViewTabs>
          </Center>
          <RightColumn>
            <Grip />
            <PanelTabs $h={22}>
              <PanelTab $active $overlap={-12}>
                <svg width="16" height="16"><path d="M1 2l10-1 4 3-8 4z" fill="#ffb08a" stroke="#b22" /><path d="M1 2l6 6v7L1 10z" fill="#e23a1a" /><path d="M7 8l8-4v6l-8 5z" fill="#26365e" /></svg>
                Layers
              </PanelTab>
              <PanelTab $overlap={-11}>
                <svg width="16" height="16"><path d="M1.500 2.500h13v9h-13z" fill="#8e9296" stroke="#222" /><path d="M4 14h8" stroke="#222" strokeWidth="2" /></svg>
                Display
              </PanelTab>
              <PanelTab>
                <svg width="16" height="16"><path d="M1.500 1.500h13v13h-13z" fill="#eef" stroke="#667" /><path d="M2 2h12v2H2z" fill="#3a5fd0" /><circle cx="8" cy="9.500" r="4.500" fill="#3a5fd0" /><text x="8" y="13" fontSize="9" fontWeight="bold" fill="#fff" textAnchor="middle" fontFamily="Liberation Sans, Arial, sans-serif">?</text></svg>
                Help
              </PanelTab>
              <Gear aria-label="Panel options"><GearIcon /></Gear>
            </PanelTabs>
            <LayersBody>
              <LayerTools>
                {layerTools.map(([name, art]) => <LayerTool key={name} aria-label={name}><I16>{art}</I16></LayerTool>)}
              </LayerTools>
              <LayerTable>
                <colgroup>{columns.map(([, w], i) => <col key={i} width={w} />)}</colgroup>
                <thead><tr>{columns.map(([t], i) => <Th key={i}>{t}</Th>)}</tr></thead>
                <tbody>
                  {layers.map(l => {
                    const color = l.color || '#000';
                    return (
                      <LayerRow key={l.name} $selected={l.selected} $bold={l.current}>
                        <Td><LayerName $indent={l.indent}>{l.open && <Expander aria-label={`Collapse ${l.name}`} />}{l.name}</LayerName></Td>
                        <Td>{l.current && <svg width="12" height="12"><path d="M3 6l3 3 5-7" fill="none" stroke="#000" strokeWidth="2" /></svg>}</Td>
                        <Td>{l.bulb && <BulbIcon kind={l.bulb} sel={l.selected} />}</Td>
                        <Td>{!l.current && <LockIcon locked={l.lock} sel={l.selected} />}</Td>
                        <Td><Swatch $c={color} $selected={l.selected} /></Td>
                        <Td><MaterialDot /></Td>
                        <Td $pl={3}>{l.type || 'Continuous'}</Td>
                        <Td><Diamond c={color} sel={l.selected} /></Td>
                        <Td $pl={3}>Default</Td>
                      </LayerRow>
                    );
                  })}
                </tbody>
              </LayerTable>
            </LayersBody>
            <Splitter><SplitLine $h={5} /><SplitLine $h={2} /><SplitLine $h={2} /></Splitter>
            <PanelTabs $h={21}>
              <PanelTab $active>
                <svg width="16" height="16" fill="none" strokeWidth="3">
                  <path d="M8 2a6 6 0 0 1 5.200 3" stroke="#f0a020" /><path d="M13.200 5a6 6 0 0 1-1.200 7.500" stroke="#7cc62c" />
                  <path d="M12 12.500A6 6 0 0 1 4.500 13" stroke="#20a8a0" /><path d="M4.500 13a6 6 0 0 1-1.700-8" stroke="#3a48c8" /><path d="M2.800 5A6 6 0 0 1 8 2" stroke="#d0286c" />
                </svg>
                Properties
              </PanelTab>
              <Gear aria-label="Panel options"><GearIcon /></Gear>
            </PanelTabs>
            <PropsBody>
              <PropsGrid>
                {props.map(([title, rows], g) => (
                  <React.Fragment key={title}>
                    <PropHeader $first={g === 0}>{title}</PropHeader>
                    {rows.map(([name, value, kind]) => <Property key={name} id={`${title}-${name}`.replace(/ /g, '-')} name={name} value={value} kind={kind} />)}
                  </React.Fragment>
                ))}
              </PropsGrid>
            </PropsBody>
          </RightColumn>
        </Workspace>
        <Osnap>
          {snaps.map(([t, w, on, round]) => <OsnapItem key={t} $w={w}><Check type="checkbox" defaultChecked={!!on} $round={round} />{t}</OsnapItem>)}
        </Osnap>
        <StatusBar>
          <StatusCell $w={57}>CPlane</StatusCell>
          <StatusCell $w={88}>x 128'-9 1/2"</StatusCell>
          <StatusCell $w={88}>y -25'-10 1/8"</StatusCell>
          <StatusCell $w={88}>z 0"</StatusCell>
          <StatusCell $w={88}>Feet</StatusCell>
          <StatusCell $w={173} $left><LayerChip />image</StatusCell>
          <StatusCell $w={76}>Grid Snap</StatusCell>
          <StatusCell $w={47}>Ortho</StatusCell>
          <StatusCell $w={54}>Planar</StatusCell>
          <StatusCell $w={54} $on>Osnap</StatusCell>
          <StatusCell $w={85} $on>SmartTrack</StatusCell>
          <StatusCell $w={66}>Gumball</StatusCell>
          <StatusCell $w={109}>Record History</StatusCell>
          <StatusCell $w={45}>Filter</StatusCell>
          <StatusCell $left $grow>Minutes from last save: 7</StatusCell>
        </StatusBar>
        <Taskbar>
          <TaskButton $start aria-label="Start">
            <svg width="38" height="38" viewBox="0 0 38 38">
              <defs><radialGradient id="orb" cx=".5" cy=".9" r=".9"><stop offset="0" stopColor="#4fd0f5" /><stop offset=".5" stopColor="#1c5f9e" /><stop offset="1" stopColor="#8fb0c8" /></radialGradient></defs>
              <circle cx="19" cy="19" r="17.500" fill="url(#orb)" stroke="#1c2c3c" />
              <path d="M10 12q4-3 8-1l-1 8q-4-2-8 0z" fill="#f0562a" /><path d="M20 11q4 3 9 1l-2 8q-4 2-8 0z" fill="#8cc63e" />
              <path d="M9 21q4-2 8 0l-1 8q-4-2-8 0z" fill="#3fa0e8" /><path d="M18 21q4 3 9 1l-2 8q-4 2-8-1z" fill="#fdc81e" />
            </svg>
          </TaskButton>
          <TaskButton aria-label="Internet Explorer">
            <svg width="34" height="34" viewBox="0 0 34 34" fill="none">
              <path d="M26 23a10 10 0 1 1 1-6H10" stroke="#4fc0f2" strokeWidth="5.500" />
              <path d="M4 30C-1 22 12 4 26 3q5 0 3 5" stroke="#f5c22a" strokeWidth="2.500" />
            </svg>
          </TaskButton>
          <TaskButton $open aria-label="File Explorer">
            <svg width="36" height="32" viewBox="0 0 36 32">
              <path d="M3 4h10l2 3h17v19H3z" fill="#e9cf7a" stroke="#b2934a" /><path d="M6 2h6v4H6z" fill="#3fae49" /><path d="M14 4h6v3h-6z" fill="#e05a3a" />
              <path d="M2 10h31v17H2z" fill="#f8e7a4" stroke="#c8a95c" /><path d="M8 30V19h20v11h-5v-6H13v6z" fill="#8fc8ee" stroke="#5088b8" />
            </svg>
          </TaskButton>
          <TaskButton aria-label="Media Player">
            <svg width="28" height="28" viewBox="0 0 28 28">
              <path d="M8 2h19v22H8z" fill="#7fb2dc" stroke="#4a7aa8" /><path d="M1 3h20v23H1z" fill="#a8d0ee" stroke="#4a7aa8" />
              <circle cx="11" cy="14" r="9" fill="#f08020" /><path d="M8 8l9 6-9 6z" fill="#fff" />
            </svg>
          </TaskButton>
          <TaskButton $open aria-label="Chrome">
            <svg width="30" height="30" viewBox="0 0 30 30">
              <circle cx="15" cy="15" r="14" fill="#fbc516" /><path d="M15 15L2.900 8A14 14 0 0 1 27.500 8.500z" fill="#e33b2e" />
              <path d="M15 15L2.900 8A14 14 0 0 0 14 29l7-11z" fill="#2da94f" /><path d="M15 8.500h12.600A14 14 0 0 0 2.900 8l5 9z" fill="#e33b2e" />
              <circle cx="15" cy="15" r="6.800" fill="#fff" /><circle cx="15" cy="15" r="5.300" fill="#4285f4" />
            </svg>
          </TaskButton>
          <TaskButton $open aria-label="Photoshop">
            <svg width="30" height="28" viewBox="0 0 30 28">
              <path d="M1.500 1.500h27v25h-27z" fill="#001d2b" stroke="#1fc0ee" strokeWidth="2" />
              <text x="15" y="19" fontSize="15" fontWeight="bold" fill="#2fc8f4" textAnchor="middle" fontFamily="Open Sans, Noto Sans, sans-serif">Ps</text>
            </svg>
          </TaskButton>
          <TaskButton $open aria-label="Photo Viewer">
            <svg width="30" height="26" viewBox="0 0 30 26">
              <path d="M2 2h26v21H2z" fill="#bfe2f8" stroke="#e8f4fc" strokeWidth="2" /><path d="M3 12q6-5 12 0t12-1v5H3z" fill="#2f6f6a" /><path d="M3 16h24v6H3z" fill="#2f86c8" />
              <path d="M1 7V1h7M22 1h7v6M29 19v6h-7M8 25H1v-6" fill="none" stroke="#4aa0e0" strokeWidth="2" />
            </svg>
          </TaskButton>
          <TaskButton $open $current aria-label="Rhinoceros"><RhinoIcon w={32} h={32} /></TaskButton>
          <Tray>
            <svg width="9" height="5"><path d="M0 5l4.500-5L9 5z" fill="#fff" /></svg>
            <svg width="17" height="17"><path d="M1.500 1v15" stroke="#fff" /><path d="M3 2h5l1 2h5v6H3z" fill="#eee" /><path d="M11 6l5 10H6z" fill="#f2c21a" stroke="#8a6a10" strokeWidth=".5" /><path d="M11 9v4M11 14v1" stroke="#000" strokeWidth="1.500" /></svg>
            <svg width="16" height="16" fill="none" stroke="#fff"><path d="M4.500 4.500h10v7h-10zM9 12v2M6 14.500h7M1.500 1v4M4.500 1v2M1 5.500h4M2.500 6v8h3" strokeWidth="1.300" /></svg>
            <svg width="16" height="16" fill="none" stroke="#fff"><path d="M1 5.500h2l4-4v13l-4-4H1z" fill="#fff" /><path d="M9.500 5q2 3 0 6M11.500 4q3 4 0 8" /></svg>
            <Clock>1:34 PM<br />10/7/2017</Clock>
            <ShowDesktop aria-label="Show desktop" />
          </Tray>
        </Taskbar>
      </Window>
    </Page>
  );
}
